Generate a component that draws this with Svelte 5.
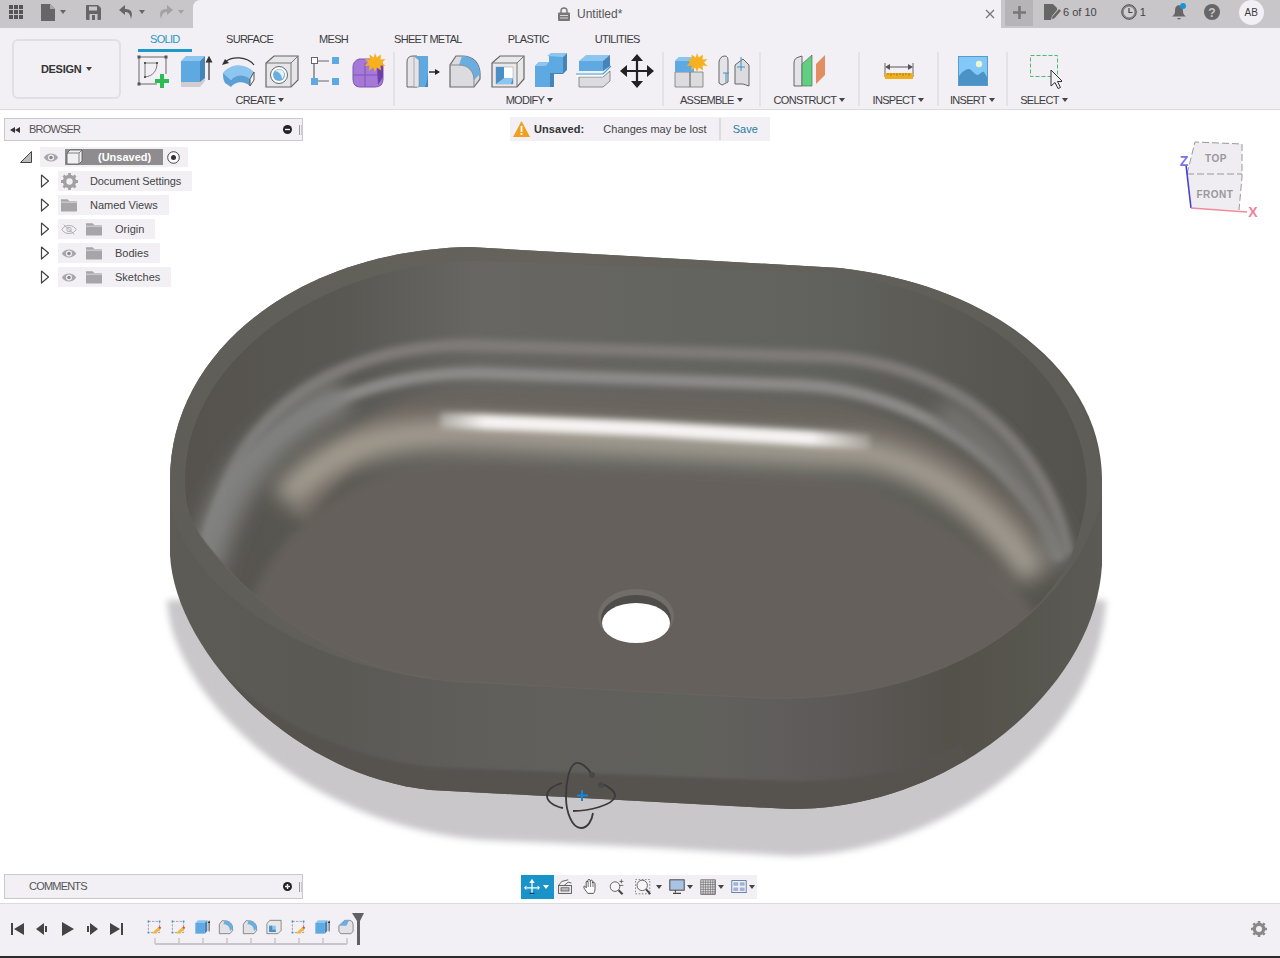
<script>
  // model outlines in page coordinates (the scene viewBox starts at y=110)
  const outline = 'M470 247L840 268C990 285 1102 370 1102 480V565C1095 690 950 810 790 809L430 790C290 775 175 650 170 555V480C170 350 300 250 470 247Z';
  const shadow = 'M167 600C170 690 300 825 480 840L640 847L790 856C940 856 1100 740 1106 600Z';
  const rimArea = 'M470 247L840 268C990 285 1102 370 1102 490C1085 610 940 705 760 698L450 681C280 665 175 570 170 495V480C170 350 300 250 470 247Z';
  const wallArea = 'M470 261L830 273C980 290 1087 380 1087 490C1085 520 1075 550 1062 575C1015 650 900 703 760 698L450 681C340 670 255 610 200 535C190 520 185 505 185 480C185 360 320 265 470 261Z';
  const lowerBand = 'M190 640C260 720 340 755 430 767L790 781C850 781 900 775 960 745L1000 830L300 830Z';
  const floor = 'M250 600C290 510 370 462 480 462L800 474C900 480 990 550 1040 620L1000 790L260 790Z';
  const bandOne = 'M215 535C225 430 320 345 470 345L830 357C960 365 1050 450 1068 555';
  const bandTwo = 'M205 550C225 450 330 372 480 373L800 385C920 390 1030 470 1060 560';
  const sideGlow = 'M205 570C225 480 275 425 345 395';
  const sideGlowRight = 'M1058 565C1040 500 1000 445 940 410';
  const valley = 'M300 520C340 440 400 400 480 402L800 414C900 420 980 470 1030 540';
  const tan = 'M285 500C320 455 370 432 470 432L860 452C930 462 990 510 1035 575';
  const shine = 'M440 420L650 429L870 442';

  const titleGrid = [0, 1, 2];
  const ticks = [0, 1, 2, 3, 4, 5, 6, 7, 8];
  const gridLines = [3, 6, 9, 12, 15, 18];
</script>

{#snippet caret()}<i class="caret"></i>{/snippet}

{#snippet extrude()}
  <svg class="ico" viewBox="0 0 36 36">
    <path d="M3 29h19l5-4v3l-5 6H3z" fill="#cfcdd0" />
    <path d="M3 8h19v21H3z" fill="#5fa9e3" />
    <path d="M3 8l5-5h19l-5 5z" fill="#8cc6f0" />
    <path d="M22 8l5-5v22l-5 4z" fill="#4684b8" />
    <path d="M31 27V6M28.500 9L31 4l2.500 5z" stroke="#333" stroke-width="1.200" fill="#333" />
  </svg>
{/snippet}

{#snippet fillet()}
  <svg class="ico" viewBox="0 0 36 36">
    <path d="M3 34V12l6-9h6c11 0 18 7 18 18v5l-6 8z" fill="#dcdbdf" stroke="#6a6a6c" stroke-width="1.200" />
    <path d="M15 3c11 0 18 7 18 18l-6 6c0-9-6-15-15-15z" fill="#6aaee0" />
    <path d="M3 12h9c9 0 15 6 15 15v7" fill="none" stroke="#8a8a8c" stroke-width="1" />
  </svg>
{/snippet}

{#snippet shell()}
  <svg class="ico" viewBox="0 0 36 36">
    <path d="M2 34V10l8-7h24v23l-7 8z" fill="#e8e7ea" stroke="#666" stroke-width="1.200" />
    <path d="M2 10h25v24M27 10l7-7" fill="none" stroke="#777" stroke-width="1" />
    <path d="M6 14h17v17H6z" fill="#fff" stroke="#aaa" stroke-width=".6" />
    <path d="M6 14h8v11h9v6H6z" fill="#4a8fc7" />
    <path d="M14 25h9l-2 6H6z" fill="#8cc6f0" />
  </svg>
{/snippet}

{#snippet sketchEdit()}
  <svg class="mini" viewBox="0 0 20 20">
    <path d="M3 3h14v14H3z" fill="none" stroke="#777" stroke-width=".8" stroke-dasharray="3 1.500" />
    <path d="M2 2h2v2H2zM16 2h2v2h-2zM2 16h2v2H2z" fill="#2f9ad6" />
    <path d="M8 18l2-3 7-6 2 2-6 7z" fill="#f0b840" />
    <path d="M17 9l2 2-1.500 1.500-2-2z" fill="#e0405a" />
  </svg>
{/snippet}

{#snippet miniExtrude()}
  <svg class="mini" viewBox="0 0 36 36">
    <path d="M3 9h21v24H3z" fill="#5fa9e3" />
    <path d="M3 9l6-6h21l-6 6z" fill="#8cc6f0" />
    <path d="M24 9l6-6v24l-6 6z" fill="#4684b8" />
    <path d="M34 28V6" stroke="#333" stroke-width="2" />
    <path d="M31 9l3-6 3 6z" fill="#333" />
  </svg>
{/snippet}

{#snippet miniFillet()}
  <svg class="mini" viewBox="0 0 36 36">
    <path d="M3 33V12l6-8h6c11 0 18 7 18 18v4l-6 7z" fill="#e2e1e5" stroke="#666" stroke-width="1.600" />
    <path d="M15 4c11 0 18 7 18 18l-6 5c0-9-6-15-15-15z" fill="#6aaee0" />
  </svg>
{/snippet}

{#snippet miniShell()}
  <svg class="mini" viewBox="0 0 36 36">
    <path d="M2 33V10l7-7h25v23l-7 7z" fill="#e8e7ea" stroke="#666" stroke-width="1.600" />
    <path d="M7 15h15v14H7z" fill="#8cc6f0" />
    <path d="M7 15h7v9h8v5H7z" fill="#4a8fc7" />
  </svg>
{/snippet}

{#snippet eye()}
  <svg class="eye" viewBox="0 0 18 12">
    <path d="M1 6c3-6 13-6 16 0-3 6-13 6-16 0z" fill="#a9a7aa" />
    <circle cx="9" cy="6" r="3.400" fill="#f2f0f4" />
    <circle cx="9" cy="6" r="2" fill="#8b898c" />
  </svg>
{/snippet}

{#snippet folder()}
  <svg class="folder" viewBox="0 0 17 14">
    <path d="M0 1h7l2 2h8v11H0z" fill="#a7a5a8" />
    <path d="M0 4h17" stroke="#f2f0f4" stroke-width=".7" />
  </svg>
{/snippet}

{#snippet arrow()}
  <svg class="arrow" viewBox="0 0 10 14"><path d="M1.500 1L8.500 7 1.500 13z" fill="#fff" stroke="#444" stroke-width="1.200" stroke-linejoin="round" /></svg>
{/snippet}

<div class="app">
  <header class="titlebar">
    <div class="quick">
      <svg class="t-grid" viewBox="0 0 14 14">
        {#each titleGrid as r}{#each titleGrid as c}<rect x={c * 5} y={r * 5} width="4" height="4" fill="#555" />{/each}{/each}
      </svg>
      <svg class="t-file" viewBox="0 0 14 17"><path d="M0 0h9l5 5v12H0z" fill="#666" /><path d="M9 0v5h5z" fill="#aaa" /></svg>
      {@render caret()}
      <svg class="t-save" viewBox="0 0 15 15">
        <path d="M0 1q0-1 1-1h11l3 3v11q0 1-1 1H1q-1 0-1-1z" fill="#666" />
        <path d="M3 1.500h8v4H3zM3.500 9h8v6h-8z" fill="#c8c6c9" /><path d="M6 10h3v5H6z" fill="#666" />
      </svg>
      <svg class="t-undo" viewBox="0 0 15 14"><path d="M6 0L0 5l6 5V7c3 0 5 1 6 7 2-6 1-10-6-10z" fill="#666" /></svg>
      {@render caret()}
      <svg class="t-redo" viewBox="0 0 15 14"><path d="M9 0l6 5-6 5V7c-3 0-5 1-6 7-2-6-1-10 6-10z" fill="#a3a1a4" /></svg>
      <i class="caret light"></i>
    </div>
    <div class="doc-tab">
      <svg class="lock" viewBox="0 0 12 14"><path d="M3 6V4a3 3 0 016 0v2" fill="none" stroke="#777" stroke-width="1.400" /><rect y="5.500" width="12" height="8.500" rx="1" fill="#777" /><path d="M2 8.500h8M2 11h8" stroke="#f2f0f4" stroke-width=".8" /></svg>
      <span class="doc-name">Untitled*</span>
      <svg class="close" viewBox="0 0 10 10"><path d="M1 1l8 8M9 1L1 9" stroke="#777" stroke-width="1.300" /></svg>
    </div>
    <div class="status">
      <div class="plus"><svg viewBox="0 0 13 13"><path d="M6.500 0v13M0 6.500h13" stroke="#777" stroke-width="2.600" /></svg></div>
      <svg class="job" viewBox="0 0 17 16"><path d="M0 0h9l4 4v2l-5 6-1 4H0z" fill="#666" /><path d="M8.500 12.500L15 5l2 1.700-6.500 7.500-2.500 1z" fill="#666" /></svg>
      <span class="count">6 of 10</span>
      <svg class="clock" viewBox="0 0 16 16"><circle cx="8" cy="8" r="7.300" fill="#888" stroke="#555" stroke-width="1" /><circle cx="8" cy="8" r="5.300" fill="#d0ced1" /><path d="M8 4v4.500h3.500" fill="none" stroke="#444" stroke-width="1.200" /></svg>
      <span class="count one">1</span>
      <svg class="bell" viewBox="0 0 15 18"><path d="M6.500 2c-3 1-3.500 3-3.500 6 0 3-1 4-3 5.500h14c-2-1.500-3-2.500-3-5.500 0-3-1-5-4.500-6z" fill="#666" /><path d="M5 15h4q-2 3-4 0z" fill="#666" /><circle cx="11" cy="3" r="3" fill="#1a94d6" /></svg>
      <svg class="help" viewBox="0 0 16 16"><circle cx="8" cy="8" r="8" fill="#666" /><text x="8" y="12.500" text-anchor="middle" class="q">?</text></svg>
      <div class="avatar">AB</div>
    </div>
  </header>

  <section class="ribbon">
    <div class="workspace"><button class="design">DESIGN {@render caret()}</button></div>
    <div class="ribbon-body">
      <nav class="tabs">
        <span class="tab active">SOLID</span><span class="tab">SURFACE</span><span class="tab">MESH</span><span class="tab">SHEET METAL</span><span class="tab">PLASTIC</span><span class="tab">UTILITIES</span>
      </nav>
      <div class="tools">
        <div class="group create">
          <div class="icons">
            <svg class="ico" viewBox="0 0 36 36">
              <path d="M4 4h27M4 4v27M4 31h18M31 4v17" stroke="#666" stroke-width="1" fill="none" />
              <path d="M2.500 2.500h3v3h-3zM29.500 2.500h3v3h-3zM2.500 29.500h3v3h-3z" fill="#555" />
              <path d="M10 10h12M10 10v14M22 10c0 8-4 13-12 14" stroke="#777" stroke-width="1" fill="none" />
              <path d="M9 9h2v2H9zM21 9h2v2h-2zM9 23h2v2H9z" fill="#555" />
              <path d="M25 21h4v5h5v4h-5v5h-4v-5h-5v-4h5z" fill="#2dbb55" />
            </svg>
            {@render extrude()}
            <svg class="ico" viewBox="0 0 36 36">
              <path d="M4 9C11 3 26 3 33 12" fill="none" stroke="#333" stroke-width="1.200" />
              <path d="M1 12l3-6 4 4z" fill="#333" />
              <path d="M2 20C10 10 24 10 33 19L29 26C23 21 15 21 10 27Z" fill="#8cc6f0" />
              <path d="M2 20L10 27C15 21 23 21 29 26V33C23 28 15 28 10 34L4 30C2 27 2 23 2 20Z" fill="#5c9fd4" />
              <path d="M29 26L33 19V27L29 33Z" fill="#f4f3f6" stroke="#555" stroke-width="1" />
            </svg>
            <svg class="ico" viewBox="0 0 36 36">
              <path d="M2 34V10l8-7h24v24l-7 7z" fill="#e6e5e8" stroke="#666" stroke-width="1.200" />
              <path d="M2 10h25v24M27 10l7-7" fill="none" stroke="#777" />
              <circle cx="15" cy="22" r="8.500" fill="#fff" stroke="#666" stroke-width="1" />
              <circle cx="15" cy="22" r="6" fill="#6aaee0" />
              <path d="M11 18a6 6 0 018 0 6 6 0 01-1 8 8 8 0 00-7-8z" fill="#e8eff5" />
            </svg>
            <svg class="ico" viewBox="0 0 36 36">
              <path d="M10 8h12M7 11v14M10 28h12" stroke="#666" stroke-width="1.200" />
              <rect x="4.500" y="4.500" width="6" height="6" fill="#fff" stroke="#666" stroke-width="1" />
              <path d="M25 4h7v7h-7zM4 25h7v7H4zM25 25h7v7h-7z" fill="#5fa9e3" />
            </svg>
            <svg class="ico" viewBox="0 0 36 36">
              <path d="M3 14q0-6 6-8h16q8 0 8 8v12q0 8-8 8H10q-7 0-7-8z" fill="#a678d8" stroke="#7e55b2" stroke-width="1" />
              <path d="M3 22h25M15 10v24" stroke="#7e55b2" stroke-width="1" />
              <path d="M27 14l6-4v14l-5 8z" fill="#6e3fa8" />
              <path d="M25 0l1.800 4.500L31 1.500l-.5 5 5-.5-3.500 3.500 3.500 3.500-5-.5.5 5-4.200-3-1.800 4.500-1.800-4.500-4.200 3 .5-5-5 .5 3.500-3.500L15 6l5 .5-.5-5 4.200 3z" fill="#f7b020" />
            </svg>
          </div>
          <span class="label">CREATE {@render caret()}</span>
        </div>
        <div class="group modify">
          <div class="icons">
            <svg class="ico" viewBox="0 0 36 36">
              <path d="M3 34V9q0-6 6-6h4v31z" fill="#e4e3e7" stroke="#666" stroke-width="1" />
              <path d="M10 3h14v31H10z" fill="#5fa9e3" /><path d="M10 3l5 4v27h-5z" fill="#e4e3e7" stroke="#888" stroke-width=".6" />
              <path d="M24 3v31h-3c4-8 3-22 3-31z" fill="#4684b8" />
              <path d="M25 19h8" stroke="#222" stroke-width="1.400" /><path d="M31 16l5 3-5 3z" fill="#222" />
            </svg>
            {@render fillet()}
            {@render shell()}
            <svg class="ico" viewBox="0 0 36 36">
              <path d="M2 13l4-4h10V3h14v18h-9v13H2z" fill="#5fa9e3" />
              <path d="M14 3l4-3h16l-4 4zM2 13l4-4h10l-3 4z" fill="#8cc6f0" />
              <path d="M30 4l4-4v17l-4 4-9 0 0 3-4 3 0-7h13z" fill="#4684b8" />
              <path d="M21 21l0 13-4 0 0-9z" fill="#4684b8" />
            </svg>
            <svg class="ico" viewBox="0 0 36 36">
              <path d="M3 8l7-6h24v11l-7 5H3z" fill="#8cc6f0" /><path d="M3 8h24v10H3z" fill="#5fa9e3" /><path d="M27 8l7-6v11l-7 5z" fill="#4684b8" />
              <path d="M3 24h24l7-6v10l-7 6H3z" fill="#dcdbdf" stroke="#777" stroke-width=".8" />
              <path d="M0 21h27l8-8" fill="none" stroke="#3ba3dc" stroke-width="1.200" />
              <path d="M0 23h27l8-8" fill="none" stroke="#fff" stroke-width="1" />
            </svg>
            <svg class="ico" viewBox="0 0 36 36">
              <path d="M18 3v30M3 18h30" stroke="#222" stroke-width="2.200" />
              <path d="M18 1l6 7H12zM18 35l-6-7h12zM1 18l7-6v12zM35 18l-7 6V12z" fill="#222" />
            </svg>
          </div>
          <span class="label">MODIFY {@render caret()}</span>
        </div>
        <div class="group assemble">
          <div class="icons">
            <svg class="ico" viewBox="0 0 36 36">
              <path d="M3 19h15v15H3zM18 19h13v15H18z" fill="#dcdbdf" stroke="#777" stroke-width=".8" />
              <path d="M3 8l4-4h15v15H3z" fill="#5fa9e3" /><path d="M3 8l4-4h15l-4 4z" fill="#8cc6f0" />
              <path d="M25 0l1.800 4.500L31 1.500l-.5 5 5-.5-3.500 3.500 3.500 3.500-5-.5.5 5-4.200-3-1.800 4.500-1.800-4.500-4.200 3 .5-5-5 .5 3.500-3.500L15 6l5 .5-.5-5 4.200 3z" fill="#f7b020" />
            </svg>
            <svg class="ico" viewBox="0 0 36 36">
              <path d="M4 30V9q1-6 6-6 3 0 3 5v21l-6 3z" fill="#e4e3e7" stroke="#666" stroke-width="1" />
              <path d="M20 12l8-6 6 6v21l-6-2-8 0z" fill="#dcdbdf" stroke="#666" stroke-width="1" />
              <path d="M11 20v9M8 20h6M26 4v14M22 14h8" stroke="#3a93cc" stroke-width="1" fill="none" />
            </svg>
          </div>
          <span class="label">ASSEMBLE {@render caret()}</span>
        </div>
        <div class="group construct">
          <div class="icons">
            <svg class="ico" viewBox="0 0 36 36">
              <path d="M2 33V10q0-5 5-6l3-1v30z" fill="#e4e3e7" stroke="#666" stroke-width="1" />
              <path d="M10 33V11l10-9v31z" fill="#60d080" stroke="#555" stroke-width=".6" />
              <path d="M24 31V11l9-9v20z" fill="#e28e62" />
            </svg>
          </div>
          <span class="label">CONSTRUCT {@render caret()}</span>
        </div>
        <div class="group inspect">
          <div class="icons">
            <svg class="ico" viewBox="0 0 36 36">
              <path d="M4 10v14M32 10v14" stroke="#666" stroke-width="1" />
              <path d="M7 14h22" stroke="#555" stroke-width="1" /><path d="M4 14l5-3v6zM32 14l-5-3v6z" fill="#555" />
              <path d="M4 20h28v6H4z" fill="#f0ae1c" />
              <path d="M7 20v2M10 20v3M13 20v2M16 20v3M19 20v2M22 20v3M25 20v2M28 20v3" stroke="#8a6a10" stroke-width=".7" />
            </svg>
          </div>
          <span class="label">INSPECT {@render caret()}</span>
        </div>
        <div class="group insert">
          <div class="icons">
            <svg class="ico" viewBox="0 0 36 36">
              <rect x="3.500" y="3.500" width="29" height="29" fill="#82c8f8" stroke="#5a9bc8" />
              <circle cx="24" cy="11" r="3.200" fill="#eef5cc" />
              <path d="M4 32V23c4-5 7-7 10-7 3 0 5 6 9 6 3-2 5-4 6-3l3 5v8z" fill="#4b93c7" />
            </svg>
          </div>
          <span class="label">INSERT {@render caret()}</span>
        </div>
        <div class="group select">
          <div class="icons">
            <svg class="ico" viewBox="0 0 36 36">
              <rect x="4.500" y="2.500" width="27" height="21" fill="none" stroke="#4cbb70" stroke-width="1" stroke-dasharray="4 2" />
              <path d="M25 17v16l4-3.500 3 6 2.500-1-3-6 5 0z" fill="#f2f0f4" stroke="#333" stroke-width="1" />
            </svg>
          </div>
          <span class="label">SELECT {@render caret()}</span>
        </div>
      </div>
    </div>
  </section>

  <main class="viewport">
    <svg class="scene" viewBox="0 110 1280 793">
      <defs>
        <linearGradient id="wall" gradientUnits="userSpaceOnUse" x1="170" x2="1102" y1="0" y2="0">
          <stop offset="0" stop-color="#55524d" /><stop offset=".19" stop-color="#5a5853" /><stop offset=".33" stop-color="#686663" /><stop offset=".5" stop-color="#646460" /><stop offset=".68" stop-color="#62635f" /><stop offset=".89" stop-color="#585650" /><stop offset="1" stop-color="#54524c" />
        </linearGradient>
        <linearGradient id="front" gradientUnits="userSpaceOnUse" x1="170" x2="1102" y1="0" y2="0">
          <stop offset="0" stop-color="#5d5b56" /><stop offset=".18" stop-color="#5b5954" /><stop offset=".35" stop-color="#605f5b" /><stop offset=".57" stop-color="#61615c" /><stop offset=".68" stop-color="#5f5b5b" /><stop offset=".84" stop-color="#54514b" /><stop offset="1" stop-color="#5c5a54" />
        </linearGradient>
        <linearGradient id="rim" gradientUnits="userSpaceOnUse" x1="170" x2="1102" y1="0" y2="0">
          <stop offset="0" stop-color="#5f5d57" /><stop offset=".4" stop-color="#65635c" /><stop offset="1" stop-color="#5f5d57" />
        </linearGradient>
        <linearGradient id="shine" gradientUnits="userSpaceOnUse" x1="420" x2="885" y1="0" y2="0">
          <stop offset="0" stop-color="#f6f3f2" stop-opacity="0" /><stop offset=".14" stop-color="#f6f3f2" /><stop offset=".84" stop-color="#f6f3f2" /><stop offset="1" stop-color="#f6f3f2" stop-opacity="0" />
        </linearGradient>
        <clipPath id="bowl"><path d={wallArea} /></clipPath>
        <clipPath id="body"><path d={outline} /></clipPath>
        <filter id="b1" filterUnits="userSpaceOnUse" x="0" y="110" width="1280" height="793"><feGaussianBlur stdDeviation="1.500" /></filter>
        <filter id="b3" filterUnits="userSpaceOnUse" x="0" y="110" width="1280" height="793"><feGaussianBlur stdDeviation="3" /></filter>
        <filter id="b5" filterUnits="userSpaceOnUse" x="0" y="110" width="1280" height="793"><feGaussianBlur stdDeviation="5" /></filter>
        <filter id="b10" filterUnits="userSpaceOnUse" x="0" y="110" width="1280" height="793"><feGaussianBlur stdDeviation="10" /></filter>
      </defs>
      <path d={shadow} fill="#c9c7ca" filter="url(#b3)" />
      <path d={outline} fill="url(#front)" />
      <g clip-path="url(#body)"><path d={lowerBand} fill="#56534f" filter="url(#b1)" /></g>
      <path d={rimArea} fill="url(#rim)" />
      <g clip-path="url(#bowl)">
        <rect x="160" y="240" width="950" height="470" fill="url(#wall)" />
        <path d={bandOne} fill="none" stroke="#7f7c79" stroke-width="12" filter="url(#b3)" />
        <path d={bandTwo} fill="none" stroke="#8d8b89" stroke-width="12" filter="url(#b3)" />
        <path d={sideGlow} fill="none" stroke="#7f807e" stroke-width="34" filter="url(#b10)" />
        <path d={sideGlowRight} fill="none" stroke="#767572" stroke-width="26" filter="url(#b10)" />
        <path d={valley} fill="none" stroke="#69645d" stroke-width="24" filter="url(#b5)" />
        <path d={floor} fill="#65615b" filter="url(#b5)" />
        <path d={tan} fill="none" stroke="#a39c91" stroke-width="30" filter="url(#b10)" />
        <path d={shine} fill="none" stroke="url(#shine)" stroke-width="15" filter="url(#b3)" />
      </g>
      <path d="M1062 575C1015 650 900 703 760 698L450 681C340 670 255 610 200 535" fill="none" stroke="#6a6862" stroke-width="1.500" stroke-opacity=".45" />
      <ellipse cx="636" cy="616" rx="38" ry="27" fill="#716e69" />
      <ellipse cx="636" cy="619" rx="35" ry="24" fill="#4f4d49" />
      <ellipse cx="636" cy="623" rx="34" ry="20" fill="#fff" />

      <g fill="none" stroke="#3a3a3c" stroke-width="1.800">
        <path d="M592 775C587 766 580 762 576 763C568 766 566 785 566 797C566 812 572 828 581 828C588 828 592 820 593 813" />
        <path d="M562 783C552 786 547 791 547 796C547 801 553 806 563 808" />
        <path d="M573 811C590 811 612 805 615 797C616 792 609 786 600 783" />
      </g>
      <circle cx="592" cy="775" r="3" fill="#48484a" /><circle cx="601" cy="785" r="3" fill="#48484a" />
      <path d="M582 790v11M577 795.500h11" stroke="#1a84d8" stroke-width="2" />
    </svg>

    <div class="browser">
      <div class="panel">
        <svg class="rewind" viewBox="0 0 10 6"><path d="M5 0L0 3l5 3zM10 0L5 3l5 3z" fill="#333" /></svg>
        <span class="panel-title">BROWSER</span>
        <svg class="sign" viewBox="0 0 9 9"><circle cx="4.500" cy="4.500" r="4.500" fill="#222" /><path d="M2 4.500h5" stroke="#f2f0f4" stroke-width="1.400" /></svg>
        <i class="grip"></i>
      </div>
      <div class="tree">
        <div class="row root">
          <svg class="collapse" viewBox="0 0 12 12"><path d="M.5 11.500L11.500.5v11z" fill="#bbb" stroke="#444" stroke-width="1" /></svg>
          <div class="pill root-pill">
            {@render eye()}
            <div class="unsaved-name">
              <svg class="box" viewBox="0 0 17 16"><path d="M1 15V5q0-1 1-2l2-2h12v11l-3 3z" fill="#f0f0f2" stroke="#555" stroke-width=".8" /><path d="M1 4h12v11M13 4l3-3" fill="none" stroke="#666" stroke-width=".8" /></svg>
              <span>(Unsaved)</span>
            </div>
            <svg class="radio" viewBox="0 0 13 13"><circle cx="6.500" cy="6.500" r="5.800" fill="#fff" stroke="#444" stroke-width="1" /><circle cx="6.500" cy="6.500" r="2.500" fill="#333" /></svg>
          </div>
        </div>
        <div class="row">
          {@render arrow()}
          <div class="pill">
            <svg class="gear" viewBox="0 0 24 24"><circle cx="12" cy="12" r="7" fill="none" stroke="#a2a0a3" stroke-width="5" /><path d="M12 0v5M12 19v5M0 12h5M19 12h5M3.500 3.500L7 7M17 17l3.500 3.500M20.500 3.500L17 7M7 17l-3.500 3.500" stroke="#a2a0a3" stroke-width="4" /></svg>
            <span class="node wide">Document Settings</span>
          </div>
        </div>
        <div class="row">
          {@render arrow()}
          <div class="pill">
            <span class="slot">{@render folder()}</span>
            <span class="node short">Named Views</span>
          </div>
        </div>
        <div class="row">
          {@render arrow()}
          <div class="pill">
            <span class="slot">
              <svg class="eye" viewBox="0 0 18 12"><path d="M1 6c3-6 13-6 16 0-3 6-13 6-16 0z" fill="none" stroke="#a9a7aa" stroke-width="1" /><circle cx="9" cy="6" r="2.500" fill="none" stroke="#a9a7aa" /><path d="M3 .5l12 11" stroke="#a9a7aa" stroke-width="1" /></svg>
            </span>
            {@render folder()}
            <span class="node">Origin</span>
          </div>
        </div>
        <div class="row">
          {@render arrow()}
          <div class="pill">
            <span class="slot">{@render eye()}</span>
            {@render folder()}
            <span class="node">Bodies</span>
          </div>
        </div>
        <div class="row">
          {@render arrow()}
          <div class="pill">
            <span class="slot">{@render eye()}</span>
            {@render folder()}
            <span class="node">Sketches</span>
          </div>
        </div>
      </div>
    </div>

    <div class="notice">
      <svg class="warn" viewBox="0 0 17 16"><path d="M8.500 0L17 16H0z" fill="#f0a020" /><path d="M8.500 5v6" stroke="#fff" stroke-width="1.800" /><circle cx="8.500" cy="13" r="1.100" fill="#fff" /></svg>
      <b>Unsaved:</b>
      <span class="notice-text">Changes may be lost</span>
      <span class="save">Save</span>
    </div>

    <svg class="cube" viewBox="0 0 90 90">
      <path d="M17 4L64 6V39L61 72L13 70L9 36Z" fill="#efedf1" />
      <path d="M9 36L17 4L64 6V39L61 72M9 36H64" fill="none" stroke="#9a989b" stroke-width="1" stroke-dasharray="7 3" />
      <text x="38" y="24" text-anchor="middle" class="face">TOP</text>
      <text x="37" y="60" text-anchor="middle" class="face">FRONT</text>
      <path d="M8 27l5 43" stroke="#4a3fd0" stroke-width="1.600" />
      <path d="M13 70l56 4" stroke="#ee8a9c" stroke-width="1.600" />
      <text x="6" y="28" text-anchor="middle" class="axis z">Z</text>
      <text x="75" y="79" text-anchor="middle" class="axis x">X</text>
    </svg>

    <div class="comments panel">
      <span class="panel-title">COMMENTS</span>
      <svg class="sign" viewBox="0 0 9 9"><circle cx="4.500" cy="4.500" r="4.500" fill="#222" /><path d="M2 4.500h5M4.500 2v5" stroke="#f2f0f4" stroke-width="1.400" /></svg>
      <i class="grip"></i>
    </div>

    <div class="navbar">
      <div class="orbit-btn">
        <svg class="nav-ico" viewBox="0 0 20 20">
          <path d="M10 1v18M3 11h14" stroke="#fff" stroke-width="1.600" /><path d="M10 0l3.500 5h-7zM3 14l-3-3 3-3zM17 8l3 3-3 3z" fill="#fff" /><path d="M7 18h6" stroke="#1b3a5a" stroke-width="1.500" />
        </svg>
        <i class="caret white"></i>
      </div>
      <svg class="nav-ico" viewBox="0 0 20 20"><rect x="2" y="8" width="16" height="10" fill="#e8e7ea" stroke="#444" /><rect x="5" y="11" width="10" height="4" fill="#bbb" stroke="#444" stroke-width=".8" /><path d="M2 8l4-5 8-2M9 8l5-4 4 1" fill="none" stroke="#444" /></svg>
      <svg class="nav-ico" viewBox="0 0 20 20"><path d="M6 18c-2-3-5-6-5-8s2-1 3 1V4c0-2 2-2 2 0V2c0-2 3-2 3 0v1c0-2 3-2 3 0v2c0-2 3-1 3 1v6c0 3-1 5-2 6z" fill="#fafafa" stroke="#333" stroke-width="1" /><path d="M6.500 4v6M9.500 3v7M12.500 4v6" stroke="#333" stroke-width=".8" /></svg>
      <svg class="nav-ico" viewBox="0 0 20 20"><circle cx="7.500" cy="9.500" r="6" fill="#f6f6f8" stroke="#555" stroke-width="1.100" /><path d="M12 14l5 5" stroke="#444" stroke-width="2.500" /><path d="M13 3h5M15.500 .5v5M13 8h5" stroke="#444" stroke-width=".9" /></svg>
      <svg class="nav-ico fit" viewBox="0 0 20 20"><rect x=".5" y=".5" width="18" height="18" fill="none" stroke="#444" stroke-width=".8" stroke-dasharray="2 2" /><circle cx="9" cy="8" r="6.500" fill="#f6f6f8" stroke="#555" stroke-width="1.100" /><path d="M14 13l5 6" stroke="#444" stroke-width="2.500" /></svg>
      <i class="caret"></i>
      <svg class="nav-ico disp" viewBox="0 0 20 20"><rect x="1" y="1" width="18" height="13" fill="#a9c3e2" stroke="#444" stroke-width="1.200" /><path d="M8 14v3M5 18h10" stroke="#444" stroke-width="1.400" /></svg>
      <i class="caret"></i>
      <svg class="nav-ico disp" viewBox="0 0 20 20">
        <rect x="1" y="1" width="18" height="18" fill="#e4e3e6" stroke="#666" />
        {#each gridLines as g}<path d="M{g + 1} 1v18M1 {g + 1}h18" stroke="#666" stroke-width=".8" />{/each}
      </svg>
      <i class="caret"></i>
      <svg class="nav-ico disp" viewBox="0 0 20 20"><rect x="1" y="2" width="18" height="15" fill="#f2f0f4" stroke="#4a6a9a" /><path d="M3 4h6v4.500H3zM11 4h6v4.500h-6zM3 10.500h6V15H3zM11 10.500h6V15h-6z" fill="#9fb4d4" /></svg>
      <i class="caret"></i>
    </div>
  </main>

  <footer class="timeline">
    <div class="player">
      <svg viewBox="0 0 14 14"><path d="M1 1h2v12H1zM14 1v12L4 7z" fill="#444" /></svg>
      <svg viewBox="0 0 14 14"><path d="M9 1v12L1 7zM10 4h2v6h-2z" fill="#444" /></svg>
      <svg viewBox="0 0 14 14"><path d="M2 0l12 7-12 7z" fill="#444" /></svg>
      <svg viewBox="0 0 14 14"><path d="M5 1v12l8-6zM2 4h2v6H2z" fill="#444" /></svg>
      <svg viewBox="0 0 14 14"><path d="M11 1h2v12h-2zM0 1v12l10-6z" fill="#444" /></svg>
    </div>
    <div class="history">
      <div class="steps">
        {@render sketchEdit()}{@render sketchEdit()}{@render miniExtrude()}{@render miniFillet()}{@render miniFillet()}{@render miniShell()}{@render sketchEdit()}{@render miniExtrude()}
        <svg class="mini" viewBox="0 0 36 36"><path d="M2 28V15L15 3h12q7 2 7 9v16l-5 5H6z" fill="#e2e1e5" stroke="#666" stroke-width="1.600" /><path d="M3 15L15 3h10l-6 12z" fill="#6aaee0" /></svg>
      </div>
      <svg class="bracket" viewBox="0 0 196 8">
        <path d="M2 7h192" stroke="#c8c6c9" stroke-width="2" />
        {#each ticks as t}<path d="M{t * 24 + 2} 1v6" stroke="#c8c6c9" stroke-width="1.500" />{/each}
      </svg>
      <svg class="marker" viewBox="0 0 12 32"><path d="M0 0h12l-4 8v24H5V8z" fill="#616063" /></svg>
    </div>
    <svg class="settings" viewBox="0 0 24 24"><circle cx="12" cy="12" r="7" fill="none" stroke="#8a888b" stroke-width="5" /><path d="M12 0v5M12 19v5M0 12h5M19 12h5M3.500 3.500L7 7M17 17l3.500 3.500M20.500 3.500L17 7M7 17l-3.500 3.500" stroke="#8a888b" stroke-width="4" /></svg>
  </footer>
</div>

<style>
  :global(body) {
    margin: 0;
    background: #fff;
  }

  .app {
    width: 1280px;
    height: 958px;
    display: flex;
    flex-direction: column;
    overflow: hidden;
    font-family: "Liberation Sans", Arial, sans-serif;
    color: #3c3c3e;
    border-bottom: 2px solid #2a2a2c;
    box-sizing: border-box;
  }

  svg {
    display: block;
    flex: none;
  }

  .caret {
    display: inline-block;
    flex: none;
    width: 0;
    height: 0;
    border-left: 3px solid transparent;
    border-right: 3px solid transparent;
    border-top: 4px solid #444;
    vertical-align: 2px;
  }
  .caret.light { border-top-color: #a3a1a4; }
  .caret.white { border-top-color: #fff; }

  /* title bar */
  .titlebar {
    height: 28px;
    flex: none;
    display: flex;
    background: #c8c6c9;
  }
  .quick {
    width: 193px;
    display: flex;
    align-items: center;
    padding-bottom: 4px;
    box-sizing: border-box;
  }
  .quick .caret { margin-left: 5px; border-top-color: #666; }
  .quick .caret.light { border-top-color: #a3a1a4; }
  .t-grid { width: 14px; height: 14px; margin-left: 9px; }
  .t-file { width: 14px; height: 17px; margin-left: 18px; }
  .t-save { width: 15px; height: 15px; margin-left: 20px; }
  .t-undo { width: 15px; height: 14px; margin-left: 18px; }
  .t-redo { width: 15px; height: 14px; margin-left: 13px; }

  .doc-tab {
    width: 808px;
    display: flex;
    align-items: center;
    background: #f2f0f4;
    border-top-left-radius: 7px;
    padding-left: 365px;
    box-sizing: border-box;
  }
  .lock { width: 12px; height: 14px; }
  .doc-name { font-size: 12px; margin-left: 7px; color: #555; }
  .close { width: 10px; height: 10px; margin-left: auto; margin-right: 6px; }

  .status {
    flex: 1;
    display: flex;
    align-items: center;
    padding-bottom: 4px;
    padding-right: 2px;
  }
  .plus {
    width: 28px;
    height: 28px;
    margin: -4px 0 -4px 4px;
    background: #b6b4b7;
    border-radius: 4px 4px 0 0;
    display: flex;
    align-items: center;
    justify-content: center;
  }
  .plus svg { width: 13px; height: 13px; }
  .job { width: 17px; height: 16px; margin-left: 11px; }
  .count { font-size: 11px; color: #444; margin-left: 2px; }
  .clock { width: 16px; height: 16px; margin-left: 24px; }
  .count.one { margin-left: 3px; }
  .bell { width: 15px; height: 18px; margin-left: 26px; }
  .help { width: 16px; height: 16px; margin-left: 17px; }
  .q { font: bold 12px "Liberation Sans", sans-serif; fill: #c8c6c9; }
  .avatar {
    width: 25px;
    height: 25px;
    margin-left: 19px;
    margin-top: 1px;
    border-radius: 50%;
    background: #f2f0f4;
    font-size: 10px;
    display: flex;
    align-items: center;
    justify-content: center;
  }

  /* ribbon */
  .ribbon {
    height: 82px;
    flex: none;
    display: flex;
    background: #f2f0f4;
    border-bottom: 1px solid #dcdadd;
    box-sizing: border-box;
  }
  .workspace {
    width: 127px;
    flex: none;
    padding: 11px 0 0 12px;
    box-sizing: border-box;
  }
  .design {
    width: 109px;
    height: 60px;
    padding: 0;
    background: #f2f0f4;
    border: 2px solid #e1dfe3;
    border-radius: 6px;
    font: bold 11px "Liberation Sans", sans-serif;
    letter-spacing: -.3px;
    color: #333;
  }
  .design .caret { margin-left: 2px; }
  .ribbon-body { flex: 1; display: flex; flex-direction: column; }
  .tabs {
    height: 24px;
    display: flex;
    gap: 22px;
    margin-left: 11px;
  }
  .tab {
    padding: 5px 12px 0;
    font-size: 11px;
    letter-spacing: -.7px;
    color: #3c3c3e;
    white-space: nowrap;
    box-sizing: border-box;
  }
  .tab.active {
    color: #1f97c9;
    border-bottom: 3px solid #1f97c9;
    width: 54px;
  }
  .tools { display: flex; height: 56px; }
  .group {
    display: flex;
    flex-direction: column;
    align-items: center;
    border-right: 2px solid #e4e2e6;
    box-sizing: border-box;
    margin: 0 0 2px;
  }
  .group:last-child { border-right: 0; }
  .create { width: 268px; padding-left: 6px; padding-right: 6px; }
  .modify { width: 269px; padding-left: 2px; }
  .assemble { width: 97px; }
  .construct { width: 99px; }
  .inspect { width: 79px; }
  .insert { width: 69px; }
  .select { width: 72px; }
  .icons {
    display: flex;
    gap: 7px;
    height: 38px;
    padding-top: 1px;
    box-sizing: border-box;
  }
  .ico { width: 36px; height: 36px; }
  .label {
    font-size: 11px;
    letter-spacing: -.7px;
    margin-top: 4px;
    white-space: nowrap;
  }
  .label .caret { margin-left: 1px; }

  /* viewport + overlays */
  .viewport {
    flex: 1;
    position: relative;
    background: #fff;
    overflow: hidden;
  }
  .scene {
    position: absolute;
    inset: 0;
    width: 1280px;
    height: 793px;
  }
  .browser {
    position: absolute;
    left: 4px;
    top: 8px;
    width: 299px;
  }
  .panel {
    height: 23px;
    display: flex;
    align-items: center;
    background: #f2f0f4;
    border: 1px solid #c9c8cb;
    box-sizing: border-box;
    position: relative;
  }
  .rewind { width: 10px; height: 6px; position: absolute; left: 5px; top: 8px; }
  .panel-title {
    margin: -2px 0 0 24px;
    font-size: 11px;
    letter-spacing: -.8px;
    color: #555;
  }
  .sign { width: 9px; height: 9px; margin-left: auto; margin-right: 7px; }
  .grip {
    width: 3px;
    height: 10px;
    border-left: 1px solid #999;
    border-right: 1px solid #ccc;
    box-sizing: border-box;
  }
  .tree { margin-top: 4px; display: flex; flex-direction: column; }
  .row {
    height: 24px;
    display: flex;
    align-items: center;
    padding-left: 36px;
  }
  .row.root { padding-left: 16px; }
  .arrow { width: 10px; height: 14px; margin-right: 8px; }
  .collapse { width: 12px; height: 12px; margin-right: 8px; }
  .pill {
    height: 20px;
    display: flex;
    align-items: center;
    background: #f2f0f4;
    padding-right: 11px;
  }
  .root-pill { padding-right: 8px; }
  .root-pill .eye { margin: 0 6px 0 3px; }
  .unsaved-name {
    width: 98px;
    height: 16px;
    display: flex;
    align-items: center;
    background: #8e8c8f;
    color: #fff;
    font-size: 11px;
    font-weight: bold;
  }
  .unsaved-name span { margin-left: 15px; }
  .box { width: 17px; height: 16px; margin-left: 1px; }
  .radio { width: 13px; height: 13px; margin-left: 4px; }
  .eye { width: 16px; height: 11px; }
  .slot { width: 28px; flex: none; padding-left: 3px; box-sizing: border-box; }
  .gear { width: 17px; height: 17px; margin-left: 3px; }
  .folder { width: 16px; height: 14px; }
  .node { font-size: 11px; margin-left: 13px; color: #444; }
  .node.wide { margin-left: 12px; letter-spacing: -.1px; }
  .node.short { margin-left: 4px; }

  .notice {
    position: absolute;
    left: 510px;
    top: 7px;
    width: 260px;
    height: 24px;
    display: flex;
    align-items: center;
    background: #f2f0f4;
    font-size: 11px;
    box-sizing: border-box;
  }
  .warn { width: 17px; height: 16px; margin-left: 3px; }
  .notice b { margin-left: 4px; color: #333; letter-spacing: .1px; }
  .notice-text { margin-left: 19px; color: #444; }
  .save {
    margin-left: 12px;
    padding-left: 12px;
    height: 22px;
    line-height: 22px;
    border-left: 2px solid #dddbdf;
    color: #2a7a9f;
  }

  .cube {
    position: absolute;
    left: 1178px;
    top: 28px;
    width: 90px;
    height: 90px;
  }
  .face {
    font: bold 10px "Liberation Sans", sans-serif;
    fill: #9a989b;
    letter-spacing: .5px;
  }
  .axis { font: bold 14px "Liberation Sans", sans-serif; }
  .axis.z { fill: #7b72e8; }
  .axis.x { fill: #f0809a; }

  .comments {
    position: absolute;
    left: 4px;
    bottom: 4px;
    width: 299px;
    height: 25px;
  }
  .navbar {
    position: absolute;
    left: 521px;
    bottom: 4px;
    width: 236px;
    height: 24px;
    display: flex;
    align-items: center;
    background: #f2f0f4;
  }
  .orbit-btn {
    width: 33px;
    height: 24px;
    flex: none;
    display: flex;
    align-items: center;
    background: #1a94c8;
    padding-left: 3px;
    box-sizing: border-box;
  }
  .orbit-btn .caret { margin-left: 3px; }
  .nav-ico { width: 16px; height: 16px; }
  .navbar > .nav-ico { margin-left: 3px; margin-right: 7px; }
  .navbar > .nav-ico.fit { margin-right: 5px; }
  .navbar > .caret { margin-right: 2px; }
  .navbar > .nav-ico.disp { margin-left: 5px; margin-right: 2px; }

  .timeline {
    height: 53px;
    flex: none;
    display: flex;
    align-items: center;
    background: #f2f0f4;
    border-top: 1px solid #dcdadd;
    box-sizing: border-box;
  }
  .player {
    display: flex;
    gap: 11px;
    margin: -3px 0 0 10px;
    width: 136px;
    flex: none;
  }
  .player svg { width: 14px; height: 14px; }
  .history {
    position: relative;
    display: flex;
    flex-direction: column;
    height: 40px;
    width: 220px;
    flex: none;
    padding-top: 9px;
    box-sizing: border-box;
  }
  .steps { display: flex; gap: 8px; }
  .mini { width: 16px; height: 16px; }
  .bracket { width: 196px; height: 8px; margin: 2px 0 0 7px; }
  .marker {
    position: absolute;
    left: 206px;
    top: 3px;
    width: 12px;
    height: 32px;
  }
  .settings { width: 16px; height: 16px; margin: -3px 13px 0 auto; }
</style>
